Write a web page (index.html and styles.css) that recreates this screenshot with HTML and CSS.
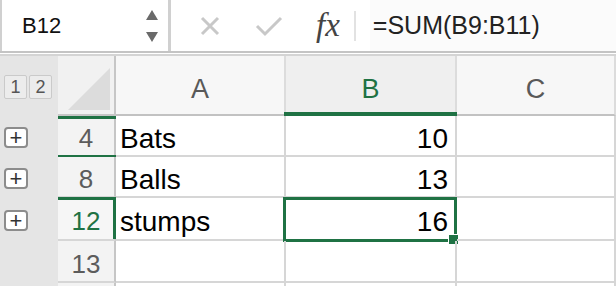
FILE: index.html
```html
<!DOCTYPE html>
<html lang="en">
<head>
    <meta charset="UTF-8">
    <title>Sheet</title>
    <link rel="stylesheet" href="styles.css">
</head>
<body>
    <!-- Formula bar -->
    <div class="toolbar">
        <div class="name-box">
            <span class="cell-ref">B12</span>
            <div class="spinner">
                <span class="arrow-up"></span>
                <span class="arrow-down"></span>
            </div>
        </div>
        <svg class="tool-icon cancel" width="24" height="24" viewBox="0 0 24 24">
            <path d="M4 4 L20 20 M20 4 L4 20" stroke="#c8c8c8" stroke-width="3" fill="none"/>
        </svg>
        <svg class="tool-icon confirm" width="28" height="24" viewBox="0 0 28 24">
            <path d="M2 12 L10 20 L26 4" stroke="#c8c8c8" stroke-width="3" fill="none"/>
        </svg>
        <span class="fx">fx</span>
        <span class="divider"></span>
        <div class="formula">=SUM(B9:B11)</div>
    </div>

    <!-- Sheet grid -->
    <div class="sheet">
        <div class="gutter levels">
            <span class="level">1</span>
            <span class="level">2</span>
        </div>
        <div class="corner"><span class="corner-tri"></span></div>
        <div class="col-head">A</div>
        <div class="col-head active">B</div>
        <div class="col-head">C</div>

        <div class="gutter"><span class="expand">+</span></div>
        <div class="row-head group-top">4</div>
        <div class="cell">Bats</div>
        <div class="cell num">10</div>
        <div class="cell"></div>

        <div class="gutter"><span class="expand">+</span></div>
        <div class="row-head">8</div>
        <div class="cell">Balls</div>
        <div class="cell num">13</div>
        <div class="cell"></div>

        <div class="gutter"><span class="expand">+</span></div>
        <div class="row-head active">12</div>
        <div class="cell">stumps</div>
        <div class="cell num selected">16</div>
        <div class="cell"></div>

        <div class="gutter"></div>
        <div class="row-head">13</div>
        <div class="cell"></div>
        <div class="cell"></div>
        <div class="cell"></div>

        <div class="gutter"></div>
        <div class="row-head"></div>
        <div class="cell"></div>
        <div class="cell"></div>
        <div class="cell"></div>
    </div>
</body>
</html>
```

FILE: styles.css
```css
/* General */
body {
    margin: 0;
    font-family: "Liberation Sans", Arial, sans-serif;
    background: #fff;
    overflow: hidden;
}

/* Formula bar */
.toolbar {
    display: flex;
    align-items: center;
    height: 51px;
    border-bottom: 2px solid #c4c4c4;
}

.name-box {
    display: flex;
    align-items: center;
    justify-content: space-between;
    box-sizing: border-box;
    width: 171px;
    height: 100%;
    padding: 0 10px 0 20px;
    border-left: 2px solid #d0d0d0;
    border-right: 3px solid #d0d0d0;
}

.cell-ref {
    font-size: 22px;
    color: #111;
}

.spinner {
    display: flex;
    flex-direction: column;
    gap: 12px;
}

.arrow-up {
    border-left: 6px solid transparent;
    border-right: 6px solid transparent;
    border-bottom: 10px solid #6a6a6a;
}

.arrow-down {
    border-left: 6px solid transparent;
    border-right: 6px solid transparent;
    border-top: 10px solid #6a6a6a;
}

.tool-icon.cancel {
    margin-left: 27px;
}

.tool-icon.confirm {
    margin-left: 33px;
}

.fx {
    margin-left: 33px;
    font-family: "Liberation Serif", "Times New Roman", serif;
    font-style: italic;
    font-size: 33px;
    color: #444;
}

.divider {
    width: 2px;
    height: 30px;
    margin-left: 14px;
    background: #e2e2e2;
}

.formula {
    flex: 1;
    align-self: stretch;
    display: flex;
    align-items: center;
    margin-left: 14px;
    padding-left: 3px;
    background: #fbfbfb;
    font-size: 25px;
    color: #222;
}

/* Sheet */
.sheet {
    display: grid;
    grid-template-columns: 58px 58px 170px 171px 1fr;
    grid-template-rows: 60px 41px 41px 43px 42px 1fr;
    height: 230px;
    margin-top: 1px;
    border-top: 2px solid #d4d4d4;
}

.gutter {
    display: flex;
    align-items: center;
    padding-left: 4px;
    background: #e5e5e5;
}

.levels {
    gap: 2px;
    padding-top: 2px;
}

.level {
    flex: none;
    box-sizing: border-box;
    width: 23px;
    height: 24px;
    display: flex;
    align-items: center;
    justify-content: center;
    border: 1px solid #cacaca;
    border-radius: 2px;
    background: #ececec;
    font-size: 18px;
    color: #555;
}

.expand {
    flex: none;
    box-sizing: border-box;
    width: 24px;
    height: 21px;
    margin-top: 2px;
    display: flex;
    align-items: center;
    justify-content: center;
    border: 2px solid #8c8c8c;
    border-radius: 4px;
    background: #fff;
    font-size: 22px;
    line-height: 1;
    color: #333;
}

.corner {
    position: relative;
    background: #f1f1f1;
    border-right: 2px solid #c6c6c6;
    border-bottom: 2px solid #c6c6c6;
}

.corner-tri {
    position: absolute;
    right: 4px;
    bottom: 4px;
    border-left: 42px solid transparent;
    border-bottom: 42px solid #dcdcdc;
}

.col-head {
    position: relative;
    display: flex;
    align-items: center;
    justify-content: center;
    padding-top: 8px;
    background: #f7f7f7;
    border-right: 2px solid #dcdcdc;
    border-bottom: 2px solid #c2c2c2;
    font-size: 27px;
    color: #595959;
}

.col-head.active {
    background: #efefef;
    color: #1f7244;
}

.col-head.active::after {
    content: "";
    position: absolute;
    left: -2px;
    right: -2px;
    bottom: -2px;
    height: 4px;
    background: #1f7244;
}

.row-head {
    position: relative;
    display: flex;
    align-items: center;
    justify-content: center;
    padding-top: 6px;
    background: #f3f3f3;
    border-right: 2px solid #c6c6c6;
    border-bottom: 2px solid #d6d6d6;
    font-size: 26px;
    color: #5c5c5c;
}

.row-head.group-top::before,
.row-head.group-top::after {
    content: "";
    position: absolute;
    left: 0;
    right: -2px;
    height: 3px;
    background: #1f7244;
}

.row-head.group-top::before {
    top: 0;
}

.row-head.group-top::after {
    bottom: -3px;
}

.row-head.active {
    background: #f6f6f6;
    color: #1f7244;
}

.row-head.active::before {
    content: "";
    position: absolute;
    left: 0;
    right: -2px;
    top: -1px;
    height: 3px;
    background: #1f7244;
}

.row-head.active::after {
    content: "";
    position: absolute;
    right: -2px;
    top: -1px;
    bottom: 0;
    width: 3px;
    background: #1f7244;
}

.cell {
    position: relative;
    display: flex;
    align-items: center;
    padding: 6px 7px 0 4px;
    border-right: 2px solid #d6d6d6;
    border-bottom: 2px solid #d6d6d6;
    font-size: 28px;
    color: #000;
}

.cell.num {
    justify-content: flex-end;
}

/* Selected cell */
.cell.selected::before {
    content: "";
    position: absolute;
    left: -3px;
    top: -1px;
    width: 174px;
    height: 45px;
    box-sizing: border-box;
    border: 3px solid #1f7244;
}

.cell.selected::after {
    content: "";
    position: absolute;
    left: 163px;
    top: 37px;
    width: 9px;
    height: 9px;
    background: #1f7244;
    outline: 1px solid #fff;
}
```
